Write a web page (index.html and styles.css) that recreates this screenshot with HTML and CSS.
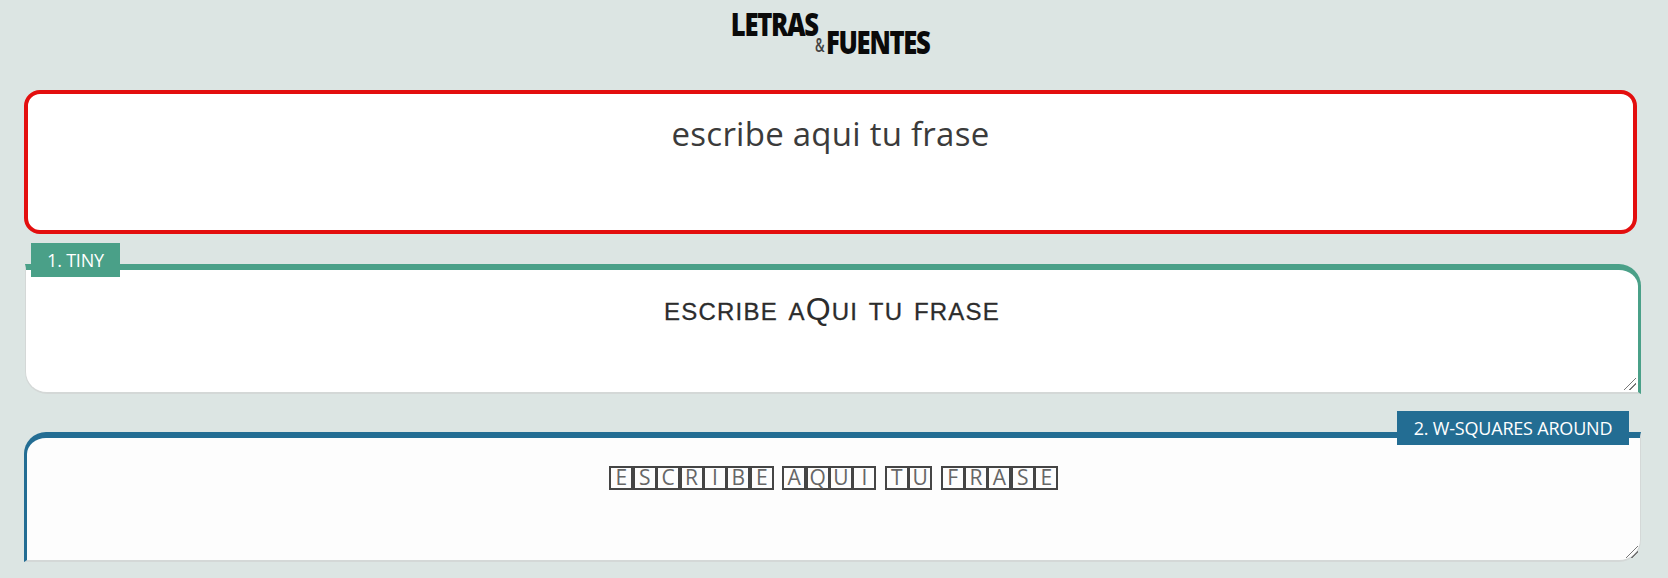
FILE: index.html
```html
<!DOCTYPE html>
<html lang="en">
<head>
  <meta charset="UTF-8">
  <meta name="viewport" content="width=device-width, initial-scale=1.0">
  <title>Letras y Fuentes</title>
  <link rel="stylesheet" href="styles.css">
</head>
<body>
  <div class="container">
    <header class="logo">
      <span class="logo-top">LETRAS</span><span class="logo-amp">&amp;</span><span class="logo-bottom">FUENTES</span>
    </header>

    <div class="input-box">escribe aqui tu frase</div>

    <div class="font-box font-tiny">
      <span class="tag tag-left">1. TINY</span>
      <div class="tiny-text">escribe a<span class="big-q">Q</span>ui tu frase</div>
    </div>

    <div class="font-box font-squares">
      <span class="tag tag-right">2. W-SQUARES AROUND</span>
      <div class="squares-text">
        <span class="word"><b>E</b><b>S</b><b>C</b><b>R</b><b>I</b><b>B</b><b>E</b></span>
        <span class="word"><b>A</b><b>Q</b><b>U</b><b>I</b></span>
        <span class="word"><b>T</b><b>U</b></span>
        <span class="word"><b>F</b><b>R</b><b>A</b><b>S</b><b>E</b></span>
      </div>
    </div>
  </div>
</body>
</html>
```

FILE: styles.css
```css
* {
  box-sizing: border-box;
}

body {
  margin: 0;
  font-family: "Open Sans", sans-serif;
  background-color: #dce5e3;
}

.container {
  padding-left: 24px;
  padding-right: 27px;
}

.logo {
  display: flex;
  justify-content: center;
  align-items: flex-start;
  height: 90px;
  padding-top: 12px;
  padding-right: 27px;
  color: #0a0a0a;
  font-weight: 800;
  font-size: 32px;
  letter-spacing: -1.6px;
  line-height: 24px;
}

.logo-top {
  transform: scaleX(0.8);
  transform-origin: right center;
}

.logo-amp {
  margin-top: 25px;
  margin-left: -3px;
  width: 11px;
  font-size: 20px;
  font-weight: 600;
  letter-spacing: 0;
  line-height: 15px;
  color: #444;
  transform: scaleX(0.65);
  transform-origin: left center;
}

.logo-bottom {
  margin-top: 18px;
  margin-right: -26px;
  transform: scaleX(0.8);
  transform-origin: left center;
}

.input-box {
  height: 144px;
  margin-right: 4px;
  padding-top: 18px;
  background-color: #fff;
  border: 4px solid #e30e0e;
  border-radius: 16px;
  text-align: center;
  color: #3b3b3b;
  font-size: 33px;
  letter-spacing: 0.25px;
  line-height: 44px;
}

.font-box {
  position: relative;
  height: 130px;
  text-align: center;
  border-style: solid;
}

.font-tiny {
  margin-top: 30px;
  margin-left: 1px;
  background-color: #fff;
  border-width: 6px 3px 2px 1px;
  border-color: #4aa088 #4aa088 #d4d8d7 #d4d8d7;
  border-radius: 0 22px 0 22px;
}

.font-squares {
  margin-top: 38px;
  background-color: #fdfdfd;
  border-width: 6px 1px 2px 3px;
  border-color: #236d93 #d4d8d7 #d4d8d7 #236d93;
  border-radius: 22px 0 22px 0;
}

.font-box::after {
  content: "";
  position: absolute;
  right: 2px;
  bottom: 2px;
  width: 12px;
  height: 12px;
  background: linear-gradient(135deg,
    transparent 0 46%, #777 46% 54%, transparent 54% 70%, #777 70% 78%, transparent 78%);
}

.tag {
  position: absolute;
  top: -27px;
  height: 34px;
  color: #fff;
  font-size: 18px;
  letter-spacing: -0.2px;
  line-height: 34px;
  white-space: nowrap;
}

.tag-left {
  left: 5px;
  width: 89px;
  background-color: #4aa088;
}

.tag-right {
  right: 11px;
  width: 232px;
  background-color: #236d93;
}

.tiny-text {
  padding-top: 20px;
  color: #2c2c2c;
  font-family: "Liberation Sans", sans-serif;
  font-variant: small-caps;
  font-size: 34px;
  letter-spacing: 1.2px;
  line-height: 36px;
  -webkit-text-stroke: 0.3px #2c2c2c;
}

.big-q {
  font-variant: normal;
  font-size: 32px;
  -webkit-text-stroke: 0;
}

.squares-text {
  display: flex;
  justify-content: center;
  gap: 9px;
  padding-top: 28px;
}

.word {
  display: flex;
}

.word b {
  width: 24px;
  height: 24px;
  margin-right: -0.6px;
  border: 2px solid #454545;
  color: #666;
  font-weight: 400;
  font-size: 21px;
  line-height: 19px;
  text-align: center;
}
```
